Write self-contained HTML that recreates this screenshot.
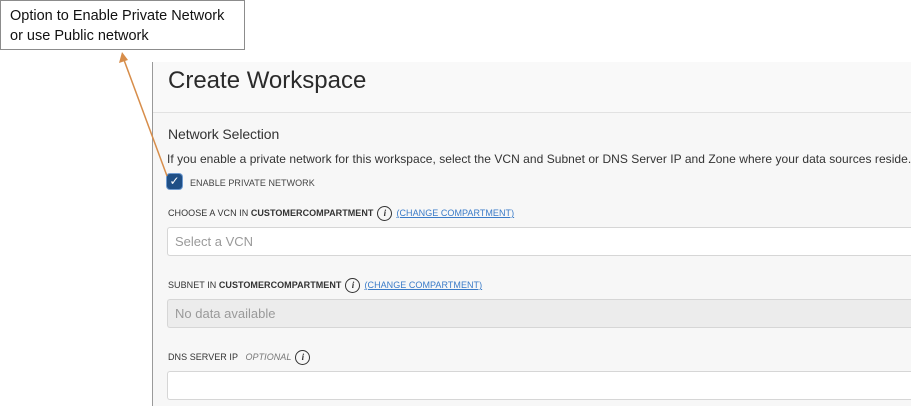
<!DOCTYPE html>
<html><head><style>
body{margin:0;width:911px;height:406px;background:#fff;position:relative;overflow:hidden;font-family:"Liberation Sans",sans-serif;}
.abs{position:absolute}
.panel{left:152px;top:62px;width:759px;height:344px;background:#f7f7f7;border-left:1px solid #9a9a9a}
.hdr{left:153px;top:62px;width:758px;height:50px;background:#f9f9f9;border-bottom:1px solid #e2e2e2}
.lbl{font-size:9px;color:#333;letter-spacing:0.05px}
.lbl b{font-weight:bold}
.info{display:inline-block;width:13px;height:13px;border:1.3px solid #333;border-radius:50%;font:italic bold 9px "Liberation Serif",serif;text-align:center;line-height:13px;vertical-align:middle;margin:0 4px 0 4px;color:#333}
.link{color:#3a7bc8;text-decoration:underline}
.inp{left:167px;width:744px;height:29px;border:1px solid #d6d6d6;border-right:none;border-radius:3px 0 0 3px;background:#fff;font-size:13px;color:#9a9a9a;line-height:28px;padding-left:7px;box-sizing:border-box}
</style></head><body>
<div class="abs panel"></div>
<div class="abs hdr"></div>
<div class="abs" style="left:168px;top:67px;font-size:24px;color:#2b2b2b">Create Workspace</div>
<div class="abs" style="left:168px;top:126px;font-size:14px;color:#333;letter-spacing:-0.1px">Network Selection</div>
<div class="abs" style="left:167px;top:152px;font-size:12px;color:#333;white-space:nowrap;letter-spacing:0.04px">If you enable a private network for this workspace, select the VCN and Subnet or DNS Server IP and Zone where your data sources reside.</div>
<div class="abs" style="left:167px;top:174px;width:15px;height:15px;background:#1f4f86;border-radius:3px;color:#fff;font-size:12px;text-align:center;line-height:15px;box-shadow:0 0 0 1px #6f9bd0">✓</div>
<div class="abs lbl" style="left:190px;top:178px;color:#444">ENABLE PRIVATE NETWORK</div>
<div class="abs lbl" style="left:168px;top:206px">CHOOSE A VCN IN <b>CUSTOMERCOMPARTMENT</b><span class="info">i</span><span class="link">(CHANGE COMPARTMENT)</span></div>
<div class="abs inp" style="top:227px">Select a VCN</div>
<div class="abs lbl" style="left:168px;top:278px">SUBNET IN <b>CUSTOMERCOMPARTMENT</b><span class="info">i</span><span class="link">(CHANGE COMPARTMENT)</span></div>
<div class="abs inp" style="top:299px;background:#ececec">No data available</div>
<div class="abs lbl" style="left:168px;top:350px">DNS SERVER IP &nbsp;&nbsp;<i style="color:#777">OPTIONAL</i><span class="info">i</span></div>
<div class="abs inp" style="top:371px"></div>
<div class="abs" style="left:0;top:0;width:245px;height:50px;border:1px solid #8c8c8c;background:#fff;box-sizing:border-box"></div>
<div class="abs" style="left:10px;top:6px;font-size:14.5px;line-height:20px;color:#111;font-family:'Liberation Sans',sans-serif">Option to Enable Private Network<br>or use Public network</div>
<svg class="abs" style="left:0;top:0" width="911" height="406"><line x1="167" y1="176" x2="124" y2="60" stroke="#d78d4a" stroke-width="1.5"/><polygon points="122,52 119,63 128,60" fill="#d78d4a"/></svg>
</body></html>
